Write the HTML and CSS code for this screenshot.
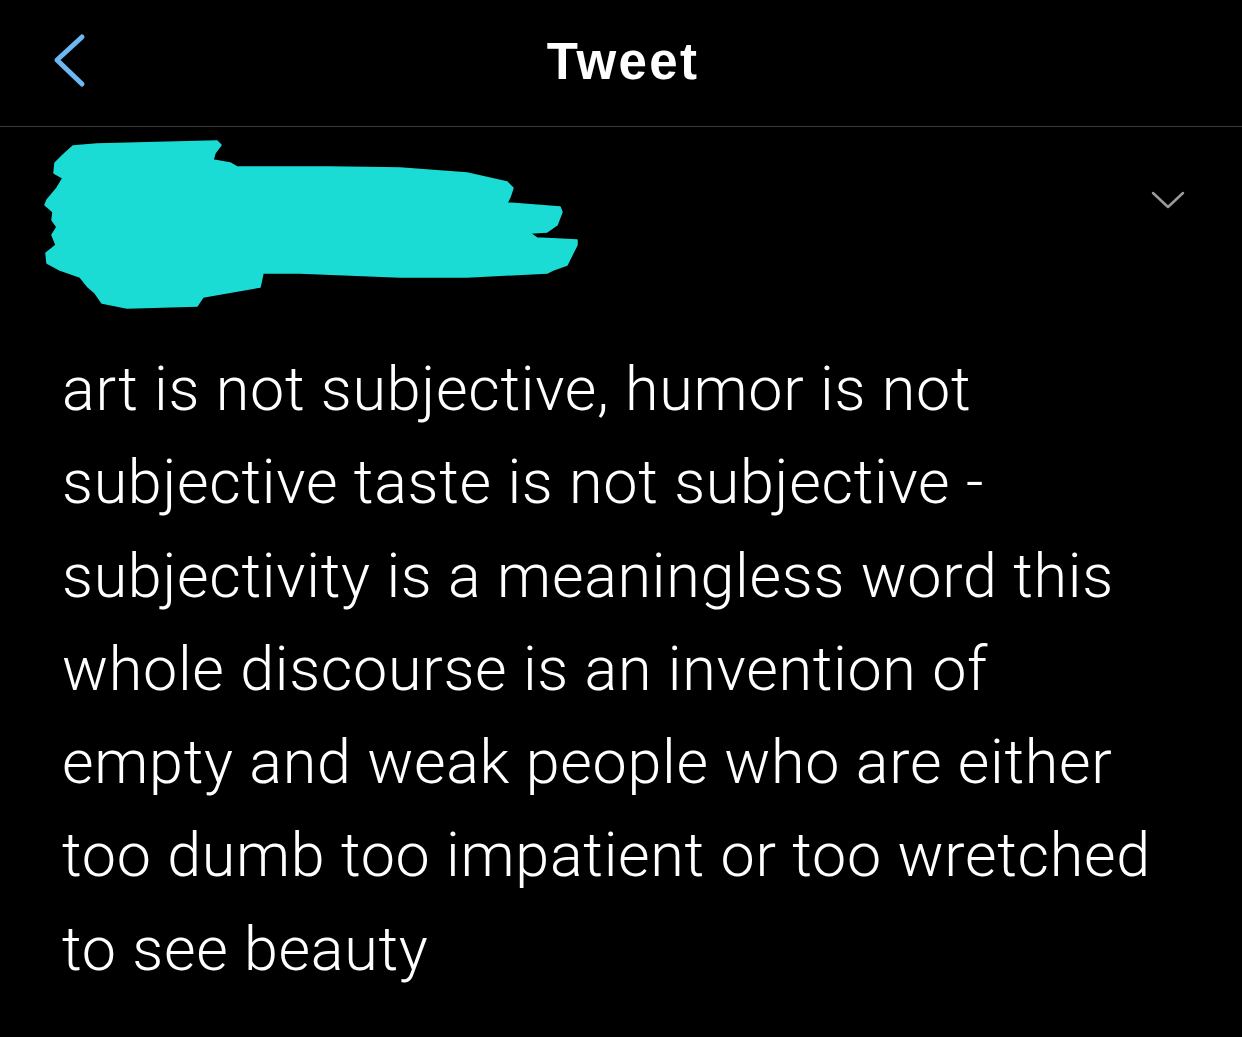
FILE: index.html
```html
<!DOCTYPE html>
<html lang="en">
<head>
<meta charset="utf-8">
<title>Tweet</title>
<link rel="stylesheet" href="styles.css">
</head>
<body>
<header class="topbar">
  <svg class="back" width="40" height="60" viewBox="0 0 40 60" aria-hidden="true">
    <polyline points="32,6 7,29 32,53" fill="none" stroke="#6cb8f4" stroke-width="5" stroke-linecap="round" stroke-linejoin="round"/>
  </svg>
  <h1 class="title">Tweet</h1>
  <span class="spacer"></span>
</header>
<main class="tweet">
  <div class="author">
    <svg class="redact" width="600" height="190" viewBox="0 127 600 190" aria-hidden="true">
      <polygon fill="#1bdcd5" stroke="#1bdcd5" stroke-width="1.5" stroke-linejoin="round" points="73,146 97,144 217,141 221,145 215,153 213,160 230,163 237,167 330,167 400,168 467,173 507,182 513,188 510,197 507,203 560,207 562,212 557,225 547,232 530,233 537,238 577,240 577,245 572,255 567,265 553,270 547,273 467,277 400,277 300,273 263,273 260,287 243,290 203,297 197,306 127,308 102,303 95,293 88,287 80,277 60,270 47,263 46,253 56,245 52,235 57,227 52,220 53,212 45,205 47,200 57,188 63,178 54,173 55,163 63,155"/>
    </svg>
    <svg class="caret" width="36" height="22" viewBox="0 0 36 22" aria-hidden="true">
      <polyline points="3,4 18,18 33,4" fill="none" stroke="#9a9a9a" stroke-width="2.5" stroke-linecap="round" stroke-linejoin="round"/>
    </svg>
  </div>
  <p class="text">art is not subjective, humor is not<br>subjective taste is not subjective -<br>subjectivity is a meaningless word this<br>whole discourse is an invention of<br>empty and weak people who are either<br>too dumb too impatient or too wretched<br>to see beauty</p>
</main>
</body>
</html>
```
FILE: styles.css
```css
html, body {
  margin: 0;
  padding: 0;
  background: #000;
}
body {
  width: 1242px;
  height: 1037px;
  overflow: hidden;
  color: #fff;
  font-family: Roboto, "Liberation Sans", sans-serif;
}
.topbar {
  height: 127px;
  box-sizing: border-box;
  border-bottom: 1px solid #3b3b3b;
  display: flex;
  align-items: center;
  justify-content: space-between;
  padding: 0 40px 0 50px;
}
.back {
  display: block;
  margin-top: -5px;
}
.spacer {
  width: 40px;
}
.title {
  margin: 0;
  font-family: "Liberation Sans", Arial, sans-serif;
  font-weight: 700;
  font-size: 51px;
  letter-spacing: 2.4px;
  margin-top: -4px;
  margin-left: -6px;
}
.author {
  display: flex;
  justify-content: space-between;
  align-items: flex-start;
  padding-right: 56px;
  height: 190px;
}
.redact {
  display: block;
}
.caret {
  display: block;
  margin-top: 62px;
}
.text {
  margin: 26px 0 0 62px;
  font-family: Roboto, "Liberation Sans", sans-serif;
  font-weight: 300;
  font-size: 61px;
  letter-spacing: 0.72px;
  line-height: 93.3px;
  white-space: nowrap;
}
```
